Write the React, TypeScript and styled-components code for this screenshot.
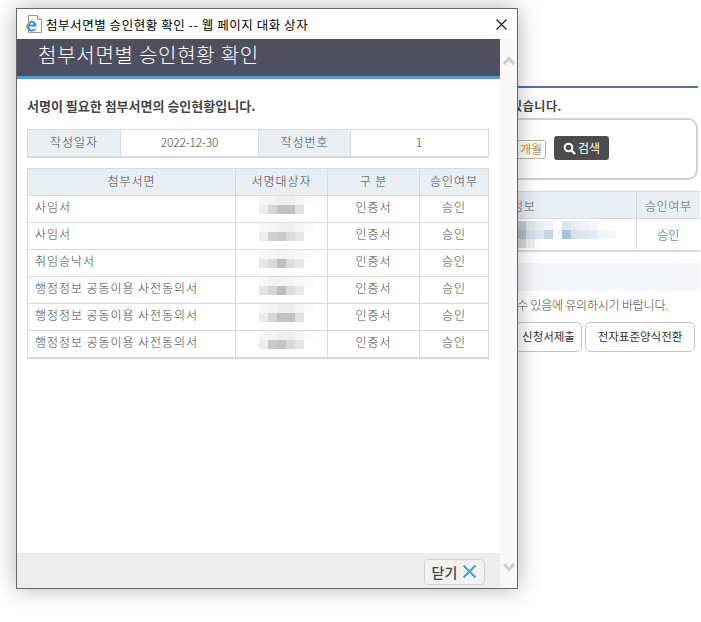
import React from 'react';
import styled, { createGlobalStyle } from 'styled-components';

const GlobalStyle = createGlobalStyle`
  html, body {
    margin: 0;
    padding: 0;
    background: #fff;
  }
  body {
    font-family: "Noto Sans CJK KR", "Liberation Sans", sans-serif;
    font-size: 12px;
    color: #555;
  }
`;

const Page = styled.div`
  position: relative;
  width: 701px;
  height: 622px;
  overflow: hidden;
`;

/* page behind the dialog, only its right edge shows */
const BackPage = styled.div`
  width: 200px;
  margin-left: 500px;
  padding-top: 86px;
  display: flex;
  flex-direction: column;
`;

const BlueRule = styled.div`
  height: 2px;
  width: 198px;
  background: #5470ae;
`;

const BackNotice = styled.div`
  margin-top: 8px;
  height: 18px;
  line-height: 19px;
  padding-left: 11px;
  font-weight: 700;
  font-size: 12px;
  letter-spacing: 0.6px;
  color: #444;
`;

const SearchBox = styled.div`
  margin-top: 4px;
  height: 62px;
  width: 198px;
  box-sizing: border-box;
  border: 2px solid #d0d0d0;
  border-radius: 0 10px 10px 0;
  border-left: 0;
  display: flex;
  align-items: flex-start;
  padding: 16px 0 0 16px;
  gap: 8px;
`;

const MonthButton = styled.span`
  width: 30px;
  height: 19px;
  margin-top: 4px;
  box-sizing: border-box;
  border: 1px solid #b9b09c;
  border-radius: 2px;
  font-size: 12px;
  font-weight: 300;
  line-height: 16px;
  text-align: center;
  color: #8a6400;
  white-space: nowrap;
`;

const SearchButton = styled.span`
  width: 55px;
  height: 24px;
  border-radius: 3px;
  background: #4c4c4c;
  color: #fff;
  font-size: 12px;
  line-height: 20px;
  display: flex;
  justify-content: center;
  gap: 2px;
  align-items: center;
`;

const BackTable = styled.table`
  margin-top: 11px;
  width: 200px;
  border-collapse: collapse;
  table-layout: fixed;
  border-bottom: 2px solid #d8d8dd;
  border-top: 1px solid #d8d8dd;
  font-weight: 300;

  th {
    height: 26px;
    padding: 0;
    background: #e9eef3;
    font-weight: 300;
    color: #555;
    border-bottom: 1px solid #d8d8dd;
    letter-spacing: 0.6px;
  }
  th:first-child {
    text-align: left;
    padding-left: 12px;
  }
  td {
    height: 31px;
    padding: 0;
    text-align: center;
    color: #25549f;
  }
  th + th, td + td {
    border-left: 1px solid #d8d8dd;
  }
`;

const GreyBand = styled.div`
  margin-top: 11px;
  height: 28px;
  width: 200px;
  background: #f4f5f8;
`;

const BackHint = styled.div`
  margin-top: 5px;
  height: 18px;
  line-height: 18px;
  padding-left: 17px;
  letter-spacing: -0.2px;
  font-weight: 300;
  white-space: nowrap;
  color: #444;
`;

const BackButtons = styled.div`
  margin-top: 8px;
  display: flex;
  gap: 3px;
  padding-left: 15px;
`;

const BackButton = styled.span<{ $w: number }>`
  width: ${p => p.$w}px;
  height: 30px;
  box-sizing: border-box;
  border: 1px solid #c4c4c4;
  border-radius: 5px;
  line-height: 27px;
  text-align: center;
  color: #333;
  font-size: 11.5px;
  white-space: nowrap;
`;

const Dialog = styled.div`
  position: absolute;
  left: 16px;
  top: 8px;
  width: 502px;
  height: 581px;
  box-sizing: border-box;
  border: 1px solid #666;
  background: #fff;
  box-shadow: 0 0 22px rgba(0, 0, 0, 0.3);
  display: flex;
  flex-direction: column;
`;

const TitleBar = styled.div`
  height: 30px;
  flex: none;
  display: flex;
  align-items: center;
  padding: 0 10px 0 8px;
  gap: 4px;
  color: #000;
  font-size: 12.5px;
  letter-spacing: 0.55px;
`;

const TitleText = styled.span`
  flex: 1;
  white-space: nowrap;
`;

const DialogBody = styled.div`
  flex: 1;
  min-height: 0;
  display: flex;
`;

const Content = styled.div`
  width: 483px;
  display: flex;
  flex-direction: column;
`;

const Banner = styled.div`
  height: 37px;
  flex: none;
  padding-left: 21px;
  background: #4f4f60;
  border-bottom: 3px solid #5499d3;
  color: #fff;
  font-size: 20px;
  font-weight: 300;
  line-height: 31px;
  letter-spacing: 0.75px;
`;

const Main = styled.div`
  flex: 1;
  padding: 18px 11px 0 10px;
`;

const Lead = styled.div`
  height: 18px;
  line-height: 18px;
  font-size: 13px;
  font-weight: 700;
  color: #444;
`;

const Grid = styled.table`
  width: 461px;
  border-collapse: collapse;
  table-layout: fixed;
  border: 1px solid #d8d8dd;
  border-bottom-width: 2px;
  letter-spacing: 0.95px;

  th, td {
    height: 22px;
    padding: 0 0 4px;
    text-align: center;
    border: 1px solid #d8d8dd;
    font-weight: 300;
    color: #444;
    font-size: 12px;
  }
  th {
    background: #e9eef3;
  }
`;

const InfoGrid = styled(Grid)`
  margin-top: 14px;
`;

const DocGrid = styled(Grid)`
  margin-top: 10px;

  td {
    height: 20px;
    padding-bottom: 6px;
  }
`;

const DateCell = styled.td`
  letter-spacing: -0.2px;
`;

const NameCell = styled.td`
  && {
    text-align: left;
    padding-left: 7px;
    white-space: nowrap;
  }
`;

const MosaicCell = styled.td`
  position: relative;
`;

const Mosaic = styled.div`
  position: absolute;
  left: 23px;
  top: 0;
  display: grid;
  grid-template-columns: repeat(6, 9px);
  grid-auto-rows: 9px;
`;

const Pixel = styled.i<{ $c: string }>`
  display: block;
  background: ${p => p.$c};
`;

const BackMosaic = styled.div`
  display: grid;
  grid-template-columns: repeat(13, 9px);
  grid-auto-rows: 9px;
  margin-left: 17px;
`;

const Scrollbar = styled.div`
  flex: 1;
  background: #f8f8f8;
  display: flex;
  flex-direction: column;
  justify-content: space-between;
  align-items: center;
  padding: 17px 0 16px;
`;

const Footer = styled.div`
  height: 35px;
  flex: none;
  background: #ececec;
  display: flex;
  justify-content: flex-end;
  align-items: center;
  padding: 2px 15px 0 0;
  box-sizing: border-box;
`;

const CloseButton = styled.div`
  width: 61px;
  height: 26px;
  box-sizing: border-box;
  border: 1px solid #d2d2d2;
  border-radius: 4px;
  background: #f1f1f1;
  display: flex;
  align-items: center;
  justify-content: center;
  gap: 5px;
  font-size: 14px;
  font-weight: 500;
  color: #444;
`;

const infoWidths = [93, 138, 92, 138];
const docWidths = [208, 92, 92, 69];

const docs = [
  { name: '사임서', shade: ['#f5f5f5', '#f3f3f3', '#eeeeee', '#eeeeee', '#f5f5f5', '#fafafa', '#ececec', '#d5d5d5', '#c2c2c2', '#c2c2c2', '#e2e2e2', '#ffffff'] },
  { name: '사임서', shade: ['#f7f7f7', '#f5f5f5', '#f0f0f0', '#f0f0f0', '#f5f5f5', '#fafafa', '#ececec', '#cfcfcf', '#c8c8c8', '#dcdcdc', '#e6e6e6', '#ffffff'] },
  { name: '취임승낙서', shade: ['#f7f7f7', '#f5f5f5', '#f3f3f3', '#f5f5f5', '#f8f8f8', '#fafafa', '#e6e6e6', '#d8d8d8', '#bdbdbd', '#dcdcdc', '#e8e8e8', '#ffffff'] },
  { name: '행정정보 공동이용 사전동의서', shade: ['#f7f7f7', '#f3f3f3', '#f3f3f3', '#f5f5f5', '#f8f8f8', '#fafafa', '#e2e2e2', '#d5d5d5', '#bdbdbd', '#dcdcdc', '#e8e8e8', '#ffffff'] },
  { name: '행정정보 공동이용 사전동의서', shade: ['#f7f7f7', '#f3f3f3', '#eeeeee', '#eeeeee', '#f5f5f5', '#fafafa', '#ececec', '#d5d5d5', '#c2c2c2', '#c2c2c2', '#e2e2e2', '#ffffff'] },
  { name: '행정정보 공동이용 사전동의서', shade: ['#f5f5f5', '#f3f3f3', '#eeeeee', '#eeeeee', '#f5f5f5', '#fafafa', '#ececec', '#c8c8c8', '#c2c2c2', '#d8d8d8', '#e6e6e6', '#ffffff'] },
];

const backShade = [
  '#c5cad5', '#dfe5ee', '#e9eef5', '#eff2f8', '#fff', '#dde4ee', '#e9eef5', '#eef2f8', '#f4f6fa', '#fff', '#fff', '#fff', '#fff',
  '#b5bccb', '#d5deea', '#dde5f0', '#c6d4e6', '#f5f7fa', '#a9bfdc', '#d6e0ed', '#dde5f0', '#e2e9f2', '#f2f5f9', '#f6f8fb', '#fff', '#fff',
  '#d8d8d8', '#eeeeee', '#fff', '#fff', '#fff', '#fff', '#fff', '#fff', '#fff', '#fff', '#fff', '#fff', '#fff',
];

function IeIcon() {
  return (
    <svg width="17" height="18" viewBox="0 0 17 18">
      <path d="M3.500 .5h9l4 4v13h-13z" fill="#fff" stroke="#9a9a9a" />
      <path d="M12.500 .5v4h4" fill="#e8e8e8" stroke="#9a9a9a" />
      <path d="M2 11.500h9.500c.3-3.400-1.800-5.500-4.500-5.500-3 0-5.200 2.500-5.200 5.500 0 3 2.200 5 5 5 2 0 3.500-.9 4.400-2.500H8.600c-.5.600-1 .8-1.600.8-1.300 0-2.300-1-2.300-2.300z" fill="#2a8fdc" />
      <path d="M4.800 9.500h3.900C8.500 8.400 7.800 7.800 6.800 7.800s-1.700.7-2 1.700z" fill="#fff" />
      <path d="M1 15C2.500 9 6 5 11 3.500 7 4 1.500 7 .5 13c-.2 1.200 0 2 .5 2z" fill="#f2a81d" />
      <path d="M11 3.500c1.500-.4 2.300.3 1.500 2.500C12.800 4.400 12.300 3.700 11 3.500z" fill="#f2a81d" />
    </svg>
  );
}

function CloseGlyph() {
  return (
    <svg width="11" height="11" viewBox="0 0 11 11">
      <path d="M.5 .5l10 10M10.500 .5l-10 10" stroke="#111" strokeWidth="1.100" fill="none" />
    </svg>
  );
}

function Chevron({ up }: { up?: boolean }) {
  return (
    <svg width="12" height="9" viewBox="0 0 12 9">
      <path d={up ? 'M1 8l5-5.500 5 5.500' : 'M1 1l5 5.500 5-5.500'} stroke="#cfcfcf" strokeWidth="3" fill="none" />
    </svg>
  );
}

function BlueCross() {
  return (
    <svg width="15" height="15" viewBox="0 0 15 15">
      <path d="M1.500 1.500l12 12M13.500 1.500l-12 12" stroke="#4f9bd9" strokeWidth="2" fill="none" />
    </svg>
  );
}

function SearchGlyph() {
  return (
    <svg width="13" height="13" viewBox="0 0 13 13">
      <circle cx="5.500" cy="5.500" r="3.800" stroke="#fff" strokeWidth="2" fill="none" />
      <path d="M8.500 8.500l3.500 3.500" stroke="#fff" strokeWidth="2.400" />
    </svg>
  );
}

export default function App() {
  return (
    <Page>
      <GlobalStyle />
      <BackPage>
        <BlueRule />
        <BackNotice>있습니다.</BackNotice>
        <SearchBox>
          <MonthButton>개월</MonthButton>
          <SearchButton><SearchGlyph />검색</SearchButton>
        </SearchBox>
        <BackTable>
          <colgroup>
            <col width="136" />
            <col width="64" />
          </colgroup>
          <thead>
            <tr><th>정보</th><th>승인여부</th></tr>
          </thead>
          <tbody>
            <tr>
              <td>
                <BackMosaic>
                  {backShade.map((c, i) => <Pixel key={i} $c={c} />)}
                </BackMosaic>
              </td>
              <td>승인</td>
            </tr>
          </tbody>
        </BackTable>
        <GreyBand />
        <BackHint>수 있음에 유의하시기 바랍니다.</BackHint>
        <BackButtons>
          <BackButton $w={67}>신청서제출</BackButton>
          <BackButton $w={110}>전자표준양식전환</BackButton>
        </BackButtons>
      </BackPage>

      <Dialog>
        <TitleBar>
          <IeIcon />
          <TitleText>첨부서면별 승인현황 확인 -- 웹 페이지 대화 상자</TitleText>
          <CloseGlyph />
        </TitleBar>
        <DialogBody>
          <Content>
            <Banner>첨부서면별 승인현황 확인</Banner>
            <Main>
              <Lead>서명이 필요한 첨부서면의 승인현황입니다.</Lead>
              <InfoGrid>
                <colgroup>
                  {infoWidths.map((w, i) => <col key={i} width={w} />)}
                </colgroup>
                <tbody>
                  <tr>
                    <th>작성일자</th>
                    <DateCell>2022-12-30</DateCell>
                    <th>작성번호</th>
                    <td>1</td>
                  </tr>
                </tbody>
              </InfoGrid>
              <DocGrid>
                <colgroup>
                  {docWidths.map((w, i) => <col key={i} width={w} />)}
                </colgroup>
                <thead>
                  <tr>
                    <th>첨부서면</th>
                    <th>서명대상자</th>
                    <th>구 분</th>
                    <th>승인여부</th>
                  </tr>
                </thead>
                <tbody>
                  {docs.map((d, i) => (
                    <tr key={i}>
                      <NameCell>{d.name}</NameCell>
                      <MosaicCell>
                        <Mosaic>
                          {d.shade.map((c, j) => <Pixel key={j} $c={c} />)}
                        </Mosaic>
                      </MosaicCell>
                      <td>인증서</td>
                      <td>승인</td>
                    </tr>
                  ))}
                </tbody>
              </DocGrid>
            </Main>
            <Footer>
              <CloseButton>닫기 <BlueCross /></CloseButton>
            </Footer>
          </Content>
          <Scrollbar>
            <Chevron up />
            <Chevron />
          </Scrollbar>
        </DialogBody>
      </Dialog>
    </Page>
  );
}
